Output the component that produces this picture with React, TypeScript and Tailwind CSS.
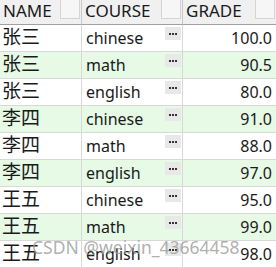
import React from 'react';

const ROWS = [
  { name: '张三', course: 'chinese', grade: '100.0' },
  { name: '张三', course: 'math', grade: '90.5' },
  { name: '张三', course: 'english', grade: '80.0' },
  { name: '李四', course: 'chinese', grade: '91.0' },
  { name: '李四', course: 'math', grade: '88.0' },
  { name: '李四', course: 'english', grade: '97.0' },
  { name: '王五', course: 'chinese', grade: '95.0' },
  { name: '王五', course: 'math', grade: '99.0' },
  { name: '王五', course: 'english', grade: '98.0' },
];

const font = { fontFamily: '"Noto Sans", "Noto Sans CJK SC", sans-serif' };

const HeaderCell: React.FC<{ label: string; last?: boolean }> = ({ label, last }) => (
  <div
    className={`relative h-[25px] bg-[#f0f0f0] border-b border-[#a0a0a0] ${last ? '' : 'border-r border-r-[#c8c8c8]'} pl-[3px] text-[17px] leading-[22px]`}
  >
    {label}
    <div className="absolute top-0 right-[1px] w-[20px] h-[19px] border border-t-0 border-[#d4d4d4] bg-[#f6f6f6]" />
  </div>
);

export default function App() {
  return (
    <div className="relative w-[276px] h-[268px] overflow-hidden bg-white text-[16px] text-[#1a1a1a]" style={font}>
      <div className="grid grid-cols-[82px_101px_93px]">
        <HeaderCell label="NAME" />
        <HeaderCell label="COURSE" />
        <HeaderCell label="GRADE" last />

        {ROWS.map((r, i) => {
          const bg = i % 2 === 1 ? 'bg-[#e6fae6]' : 'bg-white';
          return (
            <React.Fragment key={i}>
              <div className={`${bg} h-[27px] border-b border-r border-[#d8d8d8] pl-[2px] text-[19px] leading-[25px]`}>{r.name}</div>
              <div className={`${bg} relative h-[27px] border-b border-r border-[#d8d8d8] pl-[4px] leading-[26px]`}>
                {r.course}
                <div className="absolute top-[2px] right-[1px] w-[16px] h-[13px] bg-[#e8e8e8] flex items-center justify-center gap-[1px]">
                  <span className="w-[2px] h-[2px] bg-[#333]" />
                  <span className="w-[2px] h-[2px] bg-[#333]" />
                  <span className="w-[2px] h-[2px] bg-[#333]" />
                </div>
              </div>
              <div className={`${bg} h-[27px] border-b border-[#d8d8d8] pr-[4px] text-right leading-[26px]`}>{r.grade}</div>
            </React.Fragment>
          );
        })}
      </div>
      <div className="absolute left-[32px] top-[234px] text-[17.5px] text-[#9a9a9a]/80 pointer-events-none" style={{ fontFamily: '"Noto Sans", sans-serif' }}>
        CSDN @weixin_43664458
      </div>
    </div>
  );
}
